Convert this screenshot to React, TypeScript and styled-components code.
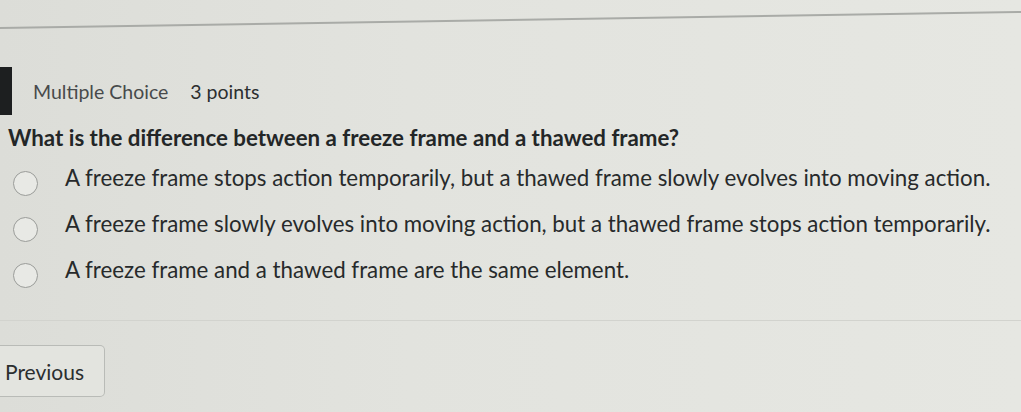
import React from "react";
import styled, { createGlobalStyle } from "styled-components";

const Global = createGlobalStyle`
  html, body { margin: 0; padding: 0; }
  body {
    width: 1021px; height: 412px; overflow: hidden;
    background: linear-gradient(90deg, #dcddd8 0%, #e2e3de 40%, #e4e5e0 70%, #e6e7e2 100%);
    font-family: Lato, "Noto Sans", sans-serif;
    color: #272a2b;
  }
`;

const Page = styled.div`
  width: 1021px;
  height: 412px;
  display: flex;
  flex-direction: column;
  position: relative;
`;

const TopRule = styled.div`
  height: 2px;
  margin-top: 19px;
  background: #a9aba7;
  transform: rotate(-0.9deg);
  transform-origin: left center;
  width: 1030px;
  position: relative;
  top: 8px;
`;

const Header = styled.div`
  display: flex;
  align-items: center;
  height: 48px;
  margin-top: 46px;
`;

const Marker = styled.div`
  width: 12px;
  height: 48px;
  background: #1d1f20;
`;

const TypeLabel = styled.span`
  font-size: 19.5px;
  color: #474a4b;
  margin-left: 21px;
`;

const Points = styled.span`
  font-size: 19.5px;
  color: #2c2f30;
  margin-left: 22px;
`;

const Question = styled.div`
  font-size: 22.3px;
  font-weight: 700;
  margin: 9px 0 0 8px;
  color: #232627;
`;

const Options = styled.div`
  display: flex;
  flex-direction: column;
  margin-top: 4px;
`;

const Option = styled.label<{ $shift?: number }>`
  display: flex;
  align-items: center;
  height: 45px;
  margin-top: ${(p) => p.$shift ?? 0}px;
`;

const Radio = styled.span`
  box-sizing: border-box;
  width: 25px;
  height: 25px;
  border-radius: 50%;
  border: 1.5px solid #9a9c99;
  background: #e8e9e5;
  margin-left: 13px;
  position: relative;
  top: 6px;
`;

const OptionText = styled.span`
  font-size: 22.3px;
  margin-left: 27px;
  color: #272a2b;
`;

const BottomRule = styled.div`
  height: 1px;
  background: #d2d3ce;
  margin-top: 28px;
`;

const PrevButton = styled.button`
  align-self: flex-start;
  margin-top: 24px;
  width: 105px;
  height: 52px;
  box-sizing: border-box;
  border: 1px solid #b9bbb7;
  border-left: none;
  border-radius: 0 5px 5px 0;
  background: #e3e4df;
  font-family: Lato, "Noto Sans", sans-serif;
  font-size: 21px;
  color: #2b2e2f;
  text-align: left;
  padding: 0 0 0 5px;
`;

const options = [
  "A freeze frame stops action temporarily, but a thawed frame slowly evolves into moving action.",
  "A freeze frame slowly evolves into moving action, but a thawed frame stops action temporarily.",
  "A freeze frame and a thawed frame are the same element.",
];

export default function App() {
  return (
    <>
      <Global />
      <Page>
        <TopRule />
        <Header>
          <Marker />
          <TypeLabel>Multiple Choice</TypeLabel>
          <Points>3 points</Points>
        </Header>
        <Question>What is the difference between a freeze frame and a thawed frame?</Question>
        <Options>
          {options.map((o, i) => (
            <Option key={i} $shift={i === 1 ? 1 : i === 2 ? 1 : 0}>
              <Radio />
              <OptionText>{o}</OptionText>
            </Option>
          ))}
        </Options>
        <BottomRule />
        <PrevButton>Previous</PrevButton>
      </Page>
    </>
  );
}
